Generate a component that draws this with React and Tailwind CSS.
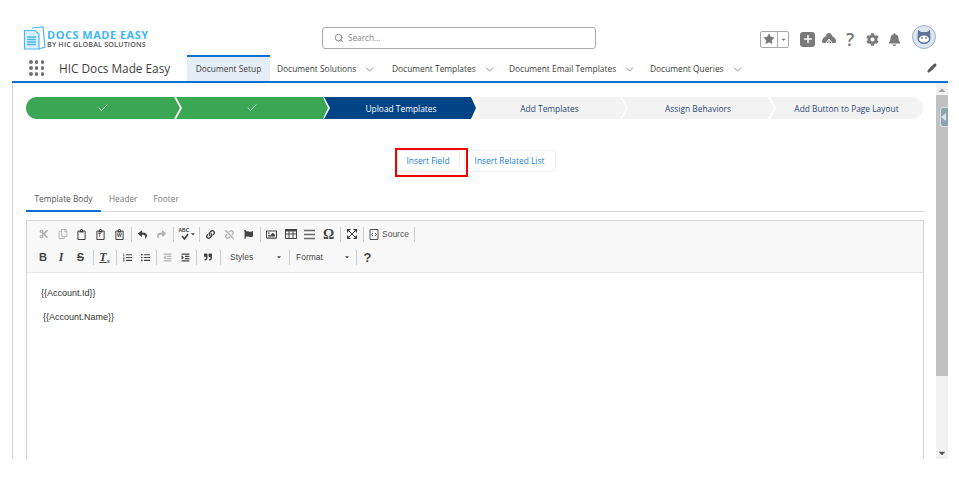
import { ChevronDown, Search, Check, Pencil, Star, Plus } from "lucide-react";
import {
  FaCut, FaRegCopy, FaRegClipboard, FaReply, FaShare, FaLink, FaUnlink, FaFlag, FaRegImage,
  FaListOl, FaListUl, FaOutdent, FaIndent, FaQuoteRight, FaCaretDown, FaCaretUp, FaCog, FaBell,
} from "react-icons/fa";

const sans = "font-['Open_Sans',sans-serif]";

function Logo() {
  return (
    <div className="flex items-center gap-[1px] pt-[3px]">
      <svg width="23" height="25" viewBox="0 0 23 25" fill="none" stroke="#4db8f0" strokeWidth="1.2">
        <path d="M9 2 L20 1 L22 21 L16 23" fill="#fff" />
        <path d="M1.5 4.5 H12 L16 8 V23 H1.5 Z" fill="#d8f0fc" />
        <path d="M4 11 H13 M4 13.5 H13 M4 16 H13 M4 18.5 H13" strokeWidth="1.3" />
      </svg>
      <div className="flex flex-col pt-[1px]">
        <span className={`${sans} text-[11px] leading-[10px] font-bold tracking-[0.5px] whitespace-nowrap text-[#3fb6f2]`}>DOCS MADE EASY</span>
        <span className={`${sans} text-[7.2px] leading-[8px] font-semibold tracking-[0.16px] whitespace-nowrap text-[#555]`}>BY HIC GLOBAL SOLUTIONS</span>
      </div>
    </div>
  );
}

function HeaderIcons() {
  return (
    <div className="flex items-center text-[#7a7a7a]">
      <div className="mt-[4px] flex items-center">
        <div className="flex h-[17px] w-[29px] rounded-[2px] border border-[#a8a8a8]">
          <div className="flex w-[17px] items-center justify-center border-r border-[#a8a8a8]">
            <Star size={12} fill="#777" strokeWidth={1} />
          </div>
          <div className="flex flex-1 items-center justify-center">
            <FaCaretDown size={7} />
          </div>
        </div>
        <div className="ml-[11px] flex h-[15px] w-[15px] items-center justify-center rounded-[3px] bg-[#7a7a7a]">
          <Plus size={12} color="#fff" strokeWidth={3} />
        </div>
        <svg className="ml-[7px]" width="14" height="13" viewBox="0 0 14 13" fill="#7a7a7a">
          <path d="M7 0 C9 0 10 2 10.5 3.5 C12.5 4 14 6 14 8.5 C14 9.5 13 10 12 10 H2 C1 10 0 9.500 0 8.500 C0 6 1.500 4 3.500 3.500 C4 2 5 0 7 0 Z" />
          <path d="M4 10 L7 6 L10 10 M7 6 V13" stroke="#fff" strokeWidth="1" fill="none" />
        </svg>
        <span className={`ml-[9px] w-[10px] text-center ${sans} text-[18px] leading-none font-semibold`}>?</span>
        <FaCog className="ml-[11px]" size={13} />
        <FaBell className="ml-[9px]" size={13} />
      </div>
      <div className="ml-[11px] flex h-[24px] w-[24px] items-center justify-center rounded-full border border-[#9fb3cc] bg-[#dbe4ef]">
        <svg width="18" height="18" viewBox="0 0 18 18">
          <path d="M3 2 L6 4 H12 L15 2 L15.500 10 C15.500 14 12 16 9 16 C6 16 2.500 14 2.500 10 Z" fill="#5a7397" />
          <ellipse cx="9" cy="11" rx="5" ry="3.600" fill="#fff" />
          <circle cx="7" cy="10" r="0.800" fill="#333" />
          <circle cx="11" cy="10" r="0.800" fill="#333" />
        </svg>
      </div>
    </div>
  );
}

function NavItem({ label, active, wClass }) {
  if (active) {
    return (
      <div className="flex h-[26px] w-[83px] items-center justify-center border-t-2 border-[#0b6fd3] bg-[#e5eef8] pt-[1px] text-[8.4px] text-[#3e3e3c]">
        {label}
      </div>
    );
  }
  return (
    <div className={`flex h-[26px] items-center pt-[2px] text-[8.4px] whitespace-nowrap text-[#3e3e3c] ${wClass}`}>
      <span>{label}</span>
      <ChevronDown className="ml-[7px] text-[#555]" size={13} strokeWidth={1.2} />
    </div>
  );
}

function Step({ label, kind, wClass, shape }) {
  const colors =
    kind === "done" ? "bg-[#3ba755] text-white" : kind === "current" ? "bg-[#014486] text-white" : "bg-[#f3f3f3] text-[#2a4a78]";
  return (
    <div className={`flex h-[22px] shrink-0 items-center justify-center text-[8.4px] ${colors} ${wClass} ${shape}`}>
      {kind === "done" ? <Check size={12} strokeWidth={1.6} /> : <span className="pt-[2px]">{label}</span>}
    </div>
  );
}

function Path() {
  return (
    <div className="flex h-[22px] w-[897px]">
      <Step kind="done" wClass="w-[154px]" shape="rounded-l-[11px] [clip-path:polygon(0_0,148px_0,154px_50%,148px_100%,0_100%)]" />
      <Step kind="done" wClass="w-[152px] -ml-[4px]" shape="[clip-path:polygon(0_0,147px_0,152px_50%,147px_100%,0_100%,6px_50%)]" />
      <Step label="Upload Templates" kind="current" wClass="w-[152px] -ml-[4px] pl-[2px]" shape="[clip-path:polygon(0_0,147px_0,152px_50%,147px_100%,0_100%,6px_50%)]" />
      <Step label="Add Templates" kind="todo" wClass="w-[153px] -ml-[3px]" shape="[clip-path:polygon(0_0,147px_0,153px_50%,147px_100%,0_100%,6px_50%)]" />
      <Step label="Assign Behaviors" kind="todo" wClass="w-[152px] -ml-[4px]" shape="[clip-path:polygon(0_0,146px_0,152px_50%,146px_100%,0_100%,6px_50%)]" />
      <Step label="Add Button to Page Layout" kind="todo" wClass="w-[153px] -ml-[4px]" shape="rounded-r-[11px] [clip-path:polygon(0_0,100%_0,100%_100%,0_100%,6px_50%)]" />
    </div>
  );
}

function Sep() {
  return <div className="mx-[1.5px] h-[15px] w-px bg-[#d0d0d0]" />;
}

function Tool({ children, faded, wClass = "w-[19px]" }) {
  return (
    <div className={`flex h-[16px] items-center justify-center ${wClass} ${faded ? "text-[#b5b5b5]" : "text-[#444]"}`}>
      {children}
    </div>
  );
}

function Paste({ letter }) {
  return (
    <div className="relative">
      <FaRegClipboard size={11} />
      <span className="absolute top-[3px] left-[3px] text-[5px] leading-[7px] font-bold">{letter}</span>
    </div>
  );
}

function Toolbar() {
  return (
    <div className="h-[52px] border-b border-[#e6e6e6] bg-[#f8f8f8] pt-[5px] pl-[7px] font-['Liberation_Sans',sans-serif] text-[#444]">
      <div className="flex h-[16px] items-center">
        <Tool faded><FaCut size={10} /></Tool>
        <Tool faded><FaRegCopy size={10} /></Tool>
        <Tool><Paste letter="" /></Tool>
        <Tool><Paste letter="T" /></Tool>
        <Tool><Paste letter="W" /></Tool>
        <Sep />
        <Tool><FaReply size={9} /></Tool>
        <Tool faded><FaShare size={9} /></Tool>
        <Sep />
        <Tool wClass="w-[22px] pl-[2px]">
          <div className="relative h-[12px] w-[11px]">
            <span className="absolute top-0 left-0 text-[5px] leading-[5px] font-bold">ABC</span>
            <svg className="absolute bottom-0 left-[2px]" width="8" height="7" viewBox="0 0 8 7" fill="none" stroke="currentColor" strokeWidth="1.600">
              <path d="M1 3 L3.500 6 L7 1" />
            </svg>
          </div>
          <FaCaretDown size={6} />
        </Tool>
        <Sep />
        <Tool><FaLink size={9} /></Tool>
        <Tool faded><FaUnlink size={9} /></Tool>
        <Tool><FaFlag size={9} /></Tool>
        <Sep />
        <Tool><FaRegImage size={11} /></Tool>
        <Tool>
          <svg width="12" height="10" viewBox="0 0 12 10" fill="none" stroke="#444">
            <path d="M.5 .5 H11.500 V9.500 H.5 Z M.5 5 H11.500 M4 2.500 V9.500 M8 2.500 V9.500" />
            <path d="M0 0 H12 V2.500 H0 Z" fill="#444" stroke="none" />
          </svg>
        </Tool>
        <Tool>
          <svg width="11" height="11" viewBox="0 0 11 11" stroke="#666">
            <path d="M0 1.500 H11 M0 5.500 H11 M0 9.500 H11" strokeWidth="1.300" />
          </svg>
        </Tool>
        <Tool><span className="pt-[2px] font-['Liberation_Serif',serif] text-[14px] leading-none font-bold">Ω</span></Tool>
        <Sep />
        <Tool>
          <svg width="10" height="10" viewBox="0 0 10 10" fill="currentColor">
            <path d="M0 0 H4 L0 4 Z M10 0 V4 L6 0 Z M0 10 V6 L4 10 Z M10 10 H6 L10 6 Z" />
            <path d="M2 2 L8 8 M8 2 L2 8" stroke="currentColor" />
          </svg>
        </Tool>
        <Sep />
        <div className="ml-[4px] flex items-center gap-[3px]">
          <svg width="10" height="11" viewBox="0 0 10 11" fill="none" stroke="#555">
            <path d="M1 .5 H9 V10.500 H1 Z" />
            <path d="M4 4 L2.500 5.500 L4 7 M6 4 L7.500 5.500 L6 7" />
          </svg>
          <span className="text-[8.5px] leading-none text-[#555]">Source</span>
        </div>
        <div className="mx-[5px] h-[15px] w-px bg-[#d0d0d0]" />
      </div>
      <div className="mt-[7px] flex h-[16px] items-center">
        <Tool wClass="w-[18px]"><span className="text-[11px] leading-none font-bold">B</span></Tool>
        <Tool wClass="w-[18px]"><span className="font-['Liberation_Serif',serif] text-[12px] leading-none font-bold italic">I</span></Tool>
        <Tool wClass="w-[21px]"><span className="text-[11px] leading-none font-bold line-through">S</span></Tool>
        <Sep />
        <Tool><span className="font-['Liberation_Serif',serif] text-[12px] leading-none font-bold italic underline">T<sub className="text-[6px]">x</sub></span></Tool>
        <Sep />
        <Tool wClass="w-[18px]"><FaListOl size={9} /></Tool>
        <Tool wClass="w-[18px]"><FaListUl size={9} /></Tool>
        <Sep />
        <Tool faded wClass="w-[18px]"><FaOutdent size={9} /></Tool>
        <Tool wClass="w-[18px]"><FaIndent size={9} /></Tool>
        <Sep />
        <Tool wClass="w-[20px]"><FaQuoteRight size={8} /></Tool>
        <Sep />
        <div className="flex w-[65px] items-center justify-between pr-[5px] pl-[8px] text-[8.5px] text-[#484848]">
          <span>Styles</span>
          <FaCaretDown size={6} />
        </div>
        <Sep />
        <div className="flex w-[63px] items-center justify-between pr-[4px] pl-[5px] text-[8.5px] text-[#484848]">
          <span>Format</span>
          <FaCaretDown size={6} />
        </div>
        <Sep />
        <Tool><span className="text-[13px] leading-none font-bold">?</span></Tool>
      </div>
    </div>
  );
}

function App() {
  return (
    <div className={`relative flex h-[492px] w-[959px] flex-col overflow-hidden bg-white ${sans}`}>
      <header className="pt-[23px] pr-[11px] pl-[12px]">
        <div className="flex h-[32px] items-start justify-between pr-[12px] pl-[11px]">
          <Logo />
          <div className="absolute top-[27px] left-[322px] flex h-[22px] w-[274px] items-center rounded-[3px] border border-[#a9a9a9] pl-[11px] text-[8.2px] text-[#888]">
            <Search size={10} strokeWidth={1.8} className="mr-[4px] text-[#666]" />
            <span className="pt-[1px]">Search...</span>
          </div>
          <div className="mt-[2px]">
            <HeaderIcons />
          </div>
        </div>
        <nav className="flex h-[28px] items-start border-b-2 border-[#0b6fd3]">
          <div className="flex h-[26px] w-[175px] shrink-0 items-center pl-[17px]">
            <div className="grid w-[15px] grid-cols-3 gap-[2.500px]">
              {[0, 1, 2, 3, 4, 5, 6, 7, 8].map((i) => (
                <span key={i} className="h-[3.500px] w-[3.500px] rounded-full bg-[#706e6b]" />
              ))}
            </div>
            <span className="ml-[15px] pt-[1px] text-[11.800px] whitespace-nowrap text-[#3e3e3c]">HIC Docs Made Easy</span>
          </div>
          <NavItem label="Document Setup" active />
          <NavItem label="Document Solutions" wClass="ml-[7px] w-[115px]" />
          <NavItem label="Document Templates" wClass="w-[117px]" />
          <NavItem label="Document Email Templates" wClass="w-[141px]" />
          <NavItem label="Document Queries" wClass="w-[100px]" />
          <Pencil className="mt-[8px] ml-auto mr-[11px] text-[#555]" size={10} fill="#555" />
        </nav>
      </header>

      <main className="ml-[12px] flex h-[376px] w-[936px] border-l border-[#d4d4d4]">
        <div className="flex w-[923px] flex-col items-start pl-[13px]">
          <div className="mt-[14px]"><Path /></div>

          <div className="mt-[31px] flex h-[22px] w-[897px] justify-center pl-[3px] text-[8.4px] text-[#1b7fd1]">
            <div className="flex w-[63px] items-center justify-center rounded-[3px] border border-[#f0f0f0]">Insert Field</div>
            <div className="ml-[4px] flex w-[92px] items-center justify-center rounded-[3px] border border-[#f0f0f0]">Insert Related List</div>
          </div>

          <div className="mt-[17px] flex h-[23px] w-[898px] items-start border-b border-[#d8d8d8] text-[8.3px] text-[#777]">
            <div className="-mb-px flex h-[23px] w-[75px] items-center justify-center border-b-2 border-[#0b6fd3] text-[#555]">Template Body</div>
            <div className="ml-[8px] flex h-[21px] items-center">Header</div>
            <div className="ml-[16px] flex h-[21px] items-center">Footer</div>
          </div>

          <div className="mt-[8px] w-[898px] flex-1 border border-b-0 border-[#d4d4d4]">
            <Toolbar />
            <div className="pt-[14px] pl-[14px] font-['Liberation_Sans',sans-serif] text-[9px] leading-[13px] text-[#333]">
              <p>{"{{Account.Id}}"}</p>
              <p className="mt-[11px] pl-[2px]">{"{{Account.Name}}"}</p>
            </div>
          </div>
        </div>

        <div className="flex w-[12px] flex-col items-center bg-[#f1f1f1] text-[#555]">
          <FaCaretUp className="mt-[2px] h-[10px] text-[#a3a3a3]" size={8} />
          <div className="h-[281px] w-full bg-[#c1c1c1]" />
          <div className="flex-1" />
          <FaCaretDown className="mb-[1px] h-[10px]" size={8} />
        </div>
      </main>

      {/* red highlight and side handle lie over the page */}
      <div className="absolute top-[148px] left-[395px] h-[29px] w-[73px] border-2 border-[#f00000]" />
      <div className="absolute top-[107px] left-[940px] flex h-[20px] w-[8px] items-center rounded-l-[3px] border-y border-l border-[#d3dfe5] bg-[#8aa5b0]">
        <div className="h-0 w-0 border-y-[4px] border-r-[5px] border-y-transparent border-r-[#dde6ea]" />
      </div>
    </div>
  );
}

export default App;
